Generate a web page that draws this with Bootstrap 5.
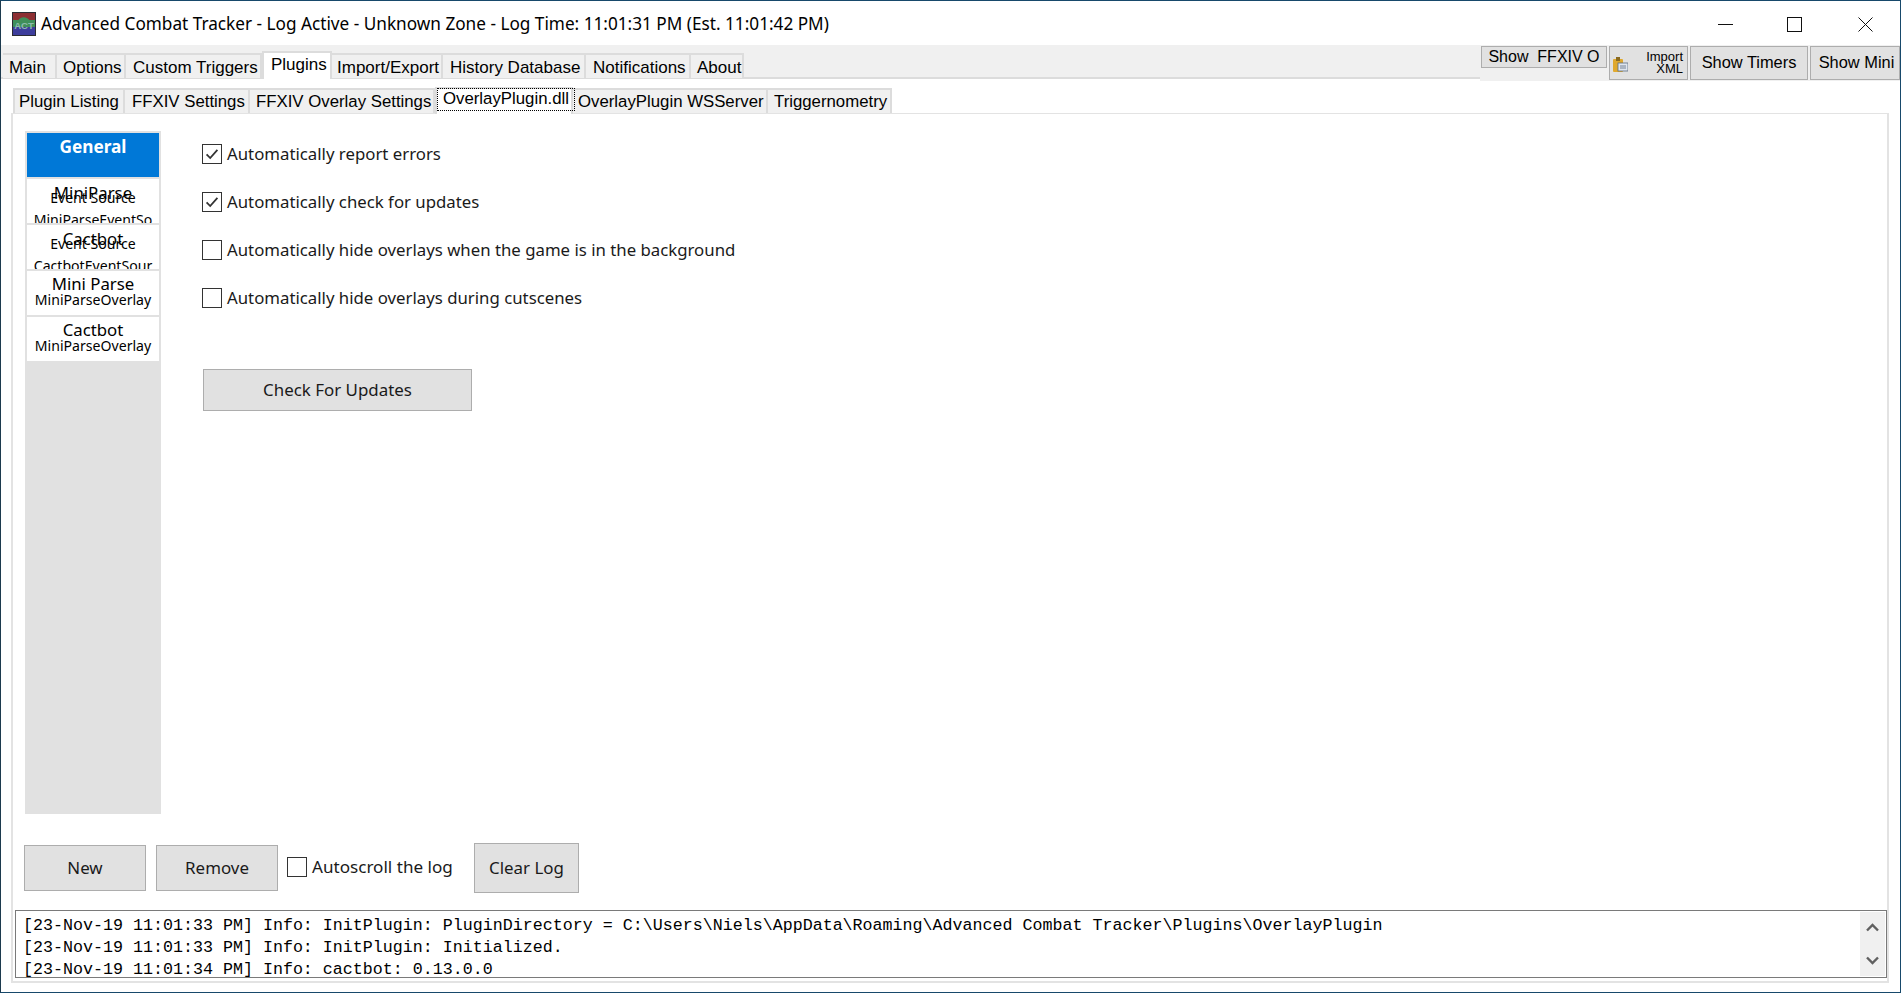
<!DOCTYPE html>
<html lang="en">
<head>
<meta charset="utf-8">
<title>Advanced Combat Tracker</title>
<link href="https://cdn.jsdelivr.net/npm/bootstrap@5.3.0/dist/css/bootstrap.min.css" rel="stylesheet">
<style>
html,body{height:993px;overflow:hidden}
body{background:#fff;color:#000;font-family:"Noto Sans","Open Sans",sans-serif}
.act-window{height:993px;border:1px solid #17496b;border-left-color:#1c3a4e;box-sizing:border-box;background:#fff;display:flex;flex-direction:column;overflow:hidden}
.act-title{height:44px;flex:none;font-size:17.2px;padding:2px 0 0 11px;gap:5px}
.act-winbtns{margin-left:auto;gap:54px;padding-right:27px}
.act-close{margin-left:2px}
.act-strip{height:36px;flex:none}
.act-mainleft{flex:1 1 auto;height:34px;background:#f0f0f0;border-bottom:2px solid #dcdcdc;padding-left:2px}
.act-mainright{flex:none;width:420px;height:36px;background:#f0f0f0;gap:2px;padding:1px 0 0 1px}
.act-tab{font-family:"Liberation Sans",sans-serif;font-size:17px;line-height:1;border:2px solid #dcdcdc;border-bottom:0;border-left:0;background:#f0f0f0;color:#000;padding:1px 0 0 var(--pad,6px);display:flex;align-items:center;justify-content:flex-start;border-radius:0;height:25px;flex:none;width:var(--w);white-space:nowrap}
.act-mainleft .act-tab{margin-bottom:-1px}
.act-tab.is-on{background:#fff;height:28px;position:relative;margin-bottom:-2px!important;border-left:2px solid #dcdcdc;padding:0 0 4px var(--pad,6px)}
.act-sub{height:25px;margin:7px 0 0 12px;flex:none;position:relative;z-index:1;font-size:16.8px}
.act-sub .act-tab{padding-top:2px;font-size:16.8px}
.act-sub .act-tab.is-on{height:27px;margin-top:-2px;padding:0 0 4px 1px;margin-bottom:-1px!important}
.act-sub .is-on span{outline:1px dotted #000;padding:2.5px 5px}
.act-first{border-left:2px solid #dcdcdc}
.act-w54{--w:54px;--pad:6px}
.act-w69{--w:69px;--pad:6px}
.act-w136{--w:136px;--pad:7px}
.act-w70{--w:70px;--pad:7px}
.act-w111{--w:111px;--pad:5px}
.act-w143{--w:143px;--pad:7px}
.act-w105{--w:105px;--pad:7px}
.act-w53{--w:53px;--pad:6px}
.act-w112{--w:112px;--pad:4px}
.act-w125{--w:125px;--pad:7px}
.act-w185{--w:185px;--pad:6px}
.act-w138{--w:138px}
.act-w195{--w:195px;--pad:5px}
.act-w124{--w:124px;--pad:6px}
.act-rbtn{font-family:"Liberation Sans",sans-serif;font-size:16.4px;background:#e1e1e1;border:1px solid #adadad;border-radius:0;color:#000;padding:0 0 2px;height:34px;flex:none;white-space:nowrap;--bs-btn-hover-bg:#e1e1e1;--bs-btn-hover-border-color:#adadad}
.act-ffxiv{width:126px;height:22px;line-height:19px;font-size:16px;padding-bottom:1px}
.act-import{width:79px;position:relative;font-size:13px;line-height:12px;text-align:right;padding:0 4px 0 0}
.act-import svg{position:absolute;left:3px;top:10px}
.act-timers{width:118px}
.act-mini{width:90px;padding-left:3px}
.act-page{flex:1 1 auto;margin:0 11px 9px 10px;border:2px solid #e3e3e3;border-top-width:1px;display:flex;flex-direction:column;min-height:0;padding:17px 0 0 3px}
.act-upper{height:683px;flex:none;gap:41px;margin-left:9px}
.act-side{width:136px;flex:none;background:#e1e1e1;padding:2px;gap:2px;border-radius:0}
.act-side .list-group-item{height:44px;flex:none;padding:0;border:0;border-radius:0;text-align:center;overflow:hidden;color:#000;font-size:16.8px;line-height:20px;background:#fff}
.act-side .list-group-item.active{background:#0078d7;color:#fff;font-weight:700;font-size:17.2px;padding-top:4px;z-index:auto}
.act-side small{display:block;font-size:14.1px;line-height:16px}
.act-side .is-clip{padding-top:4px}
.act-side .is-clip small{margin-top:-15px;line-height:20px;white-space:nowrap}
.act-side .is-clip small.act-second{margin-top:2px}
.act-side .is-ok{padding-top:3px}
.act-side .is-ok small{margin-top:-2px}
.act-options{padding-top:13px}
.act-check{display:flex;align-items:center;height:20px;margin-bottom:28px;font-size:16.8px;color:#1a1a1a;line-height:20px;gap:5px;padding:0;min-height:0}
.act-check .form-check-input,.act-auto .form-check-input{width:20px;height:20px;margin:0;float:none;border:1px solid #333;border-radius:0;background-color:#fff;flex:none;--bs-form-check-bg-image:none}
.act-check .form-check-input:checked{background-image:url("data:image/svg+xml,%3Csvg xmlns='http://www.w3.org/2000/svg' viewBox='0 0 20 20'%3E%3Cpath d='M4 10.5l4 4 8-9' fill='none' stroke='%23333' stroke-width='2'/%3E%3C/svg%3E");background-size:100%}
.act-flatbtn{font-size:16.9px;background:#e1e1e1;border:1px solid #adadad;border-width:1.5px;border-radius:0;color:#1a1a1a;padding:0;--bs-btn-hover-bg:#e1e1e1;--bs-btn-hover-border-color:#adadad;font-family:"Noto Sans",sans-serif}
.act-updates{width:269px;height:42px;margin-top:33px;margin-left:1px}
.act-bottom{margin-top:29px;height:50px;align-items:center;flex:none;padding-left:8px}
.act-bottom .act-flatbtn{width:122px;height:46px;margin-right:10px}
.act-bottom .act-clear{width:105px;height:50px;margin:0 0 0 21px}
.act-auto{display:flex;align-items:center;gap:5px;font-size:17.1px;margin:-2px 0 0 -1px;color:#1a1a1a;width:166px}
.act-log{margin:17px 0 0 -1px;width:1872px;height:68px;border:2px solid #7a7a7a;border-width:1.5px;flex:none;position:relative;overflow:hidden;font-family:"Liberation Mono",monospace;font-size:16.67px;line-height:22px;padding:4px 0 0 7px;color:#000;white-space:pre}
.act-scroll{position:absolute;right:1px;top:1px;bottom:1px;width:25px;background:#f0f0f0;display:flex;flex-direction:column;justify-content:space-between;align-items:center;padding:11px 0}
</style>
</head>
<body>
<div class="act-window">
  <div class="act-title d-flex align-items-center">
    <svg width="24" height="24" viewBox="0 0 24 24" aria-hidden="true"><rect width="24" height="24" fill="#2b2b33"/><rect x="1" y="1" width="22" height="8" fill="#8d2f33"/><path d="M6 9c2-5 9-5 12 0z" fill="#3f8f5a"/><rect x="1" y="8" width="22" height="8" fill="#3f8f5a"/><rect x="1" y="15" width="22" height="8" fill="#3d3d9c"/><text x="12" y="16.5" text-anchor="middle" font-family="Liberation Sans" font-size="9.5" font-weight="700" fill="#8fbcae">ACT</text></svg>
    <span>Advanced Combat Tracker - Log Active - Unknown Zone - Log Time: 11:01:31 PM (Est. 11:01:42 PM)</span>
    <div class="act-winbtns d-flex align-items-center">
      <svg width="15" height="15" viewBox="0 0 15 15" aria-hidden="true"><path d="M0 7.5h15" stroke="#111" stroke-width="1"/></svg>
      <svg width="15" height="15" viewBox="0 0 15 15" aria-hidden="true"><rect x=".5" y=".5" width="14" height="14" fill="none" stroke="#111"/></svg>
      <svg class="act-close" width="15" height="15" viewBox="0 0 15 15" aria-hidden="true"><path d="M.5.5l14 14M14.5.5l-14 14" stroke="#111"/></svg>
    </div>
  </div>

  <div class="act-strip d-flex align-items-start">
    <nav class="act-mainleft d-flex align-items-end">
      <div class="act-tab act-w54">Main</div>
      <div class="act-tab act-w69">Options</div>
      <div class="act-tab act-w136">Custom Triggers</div>
      <div class="act-tab act-w70 is-on">Plugins</div>
      <div class="act-tab act-w111">Import/Export</div>
      <div class="act-tab act-w143">History Database</div>
      <div class="act-tab act-w105">Notifications</div>
      <div class="act-tab act-w53">About</div>
    </nav>
    <div class="act-mainright d-flex align-items-start">
      <button class="btn act-rbtn act-ffxiv" type="button">Show&nbsp; FFXIV O</button>
      <button class="btn act-rbtn act-import" type="button"><svg width="15" height="15" viewBox="0 0 15 15" aria-hidden="true"><rect x="0" y="2" width="10" height="13" rx="1" fill="#e0a92e"/><rect x="3" y="0" width="4" height="4" fill="#8a6a20"/><rect x="5" y="6" width="10" height="8" fill="#dfe6ef" stroke="#5b6b80" stroke-width=".8"/><path d="M7 9h6M7 11h6" stroke="#5b6b80" stroke-width=".8"/></svg>Import<br>XML</button>
      <button class="btn act-rbtn act-timers" type="button">Show Timers</button>
      <button class="btn act-rbtn act-mini" type="button">Show Mini</button>
    </div>
  </div>

  <nav class="act-sub d-flex align-items-end">
    <div class="act-tab act-first act-w112">Plugin Listing</div>
    <div class="act-tab act-w125">FFXIV Settings</div>
    <div class="act-tab act-w185">FFXIV Overlay Settings</div>
    <div class="act-tab act-w138 is-on"><span>OverlayPlugin.dll</span></div>
    <div class="act-tab act-w195">OverlayPlugin WSServer</div>
    <div class="act-tab act-w124">Triggernometry</div>
  </nav>

  <main class="act-page">
    <div class="act-upper d-flex">
      <div class="act-side list-group">
        <div class="list-group-item active">General</div>
        <div class="list-group-item is-clip">MiniParse<small>Event Source</small><small class="act-second">MiniParseEventSo</small></div>
        <div class="list-group-item is-clip">Cactbot<small>Event Source</small><small class="act-second">CactbotEventSour</small></div>
        <div class="list-group-item is-ok">Mini Parse<small>MiniParseOverlay</small></div>
        <div class="list-group-item is-ok">Cactbot<small>MiniParseOverlay</small></div>
      </div>
      <div class="act-options">
        <label class="act-check form-check"><input class="form-check-input" type="checkbox" checked>Automatically report errors</label>
        <label class="act-check form-check"><input class="form-check-input" type="checkbox" checked>Automatically check for updates</label>
        <label class="act-check form-check"><input class="form-check-input" type="checkbox">Automatically hide overlays when the game is in the background</label>
        <label class="act-check form-check"><input class="form-check-input" type="checkbox">Automatically hide overlays during cutscenes</label>
        <button class="btn act-flatbtn act-updates" type="button">Check For Updates</button>
      </div>
    </div>
    <div class="act-bottom d-flex">
      <button class="btn act-flatbtn" type="button">New</button>
      <button class="btn act-flatbtn" type="button">Remove</button>
      <label class="act-auto"><input class="form-check-input" type="checkbox">Autoscroll the log</label>
      <button class="btn act-flatbtn act-clear" type="button">Clear Log</button>
    </div>
    <div class="act-log">[23-Nov-19 11:01:33 PM] Info: InitPlugin: PluginDirectory = C:\Users\Niels\AppData\Roaming\Advanced Combat Tracker\Plugins\OverlayPlugin
[23-Nov-19 11:01:33 PM] Info: InitPlugin: Initialized.
[23-Nov-19 11:01:34 PM] Info: cactbot: 0.13.0.0
<div class="act-scroll"><svg width="13" height="9" viewBox="0 0 13 9" aria-hidden="true"><path d="M1 7.5l5.5-5.5 5.5 5.5" fill="none" stroke="#606060" stroke-width="2.4"/></svg><svg width="13" height="9" viewBox="0 0 13 9" aria-hidden="true"><path d="M1 1.5l5.5 5.5 5.5-5.5" fill="none" stroke="#606060" stroke-width="2.4"/></svg></div></div>
  </main>
</div>
<script src="https://cdn.jsdelivr.net/npm/bootstrap@5.3.0/dist/js/bootstrap.bundle.min.js"></script>
</body>
</html>
